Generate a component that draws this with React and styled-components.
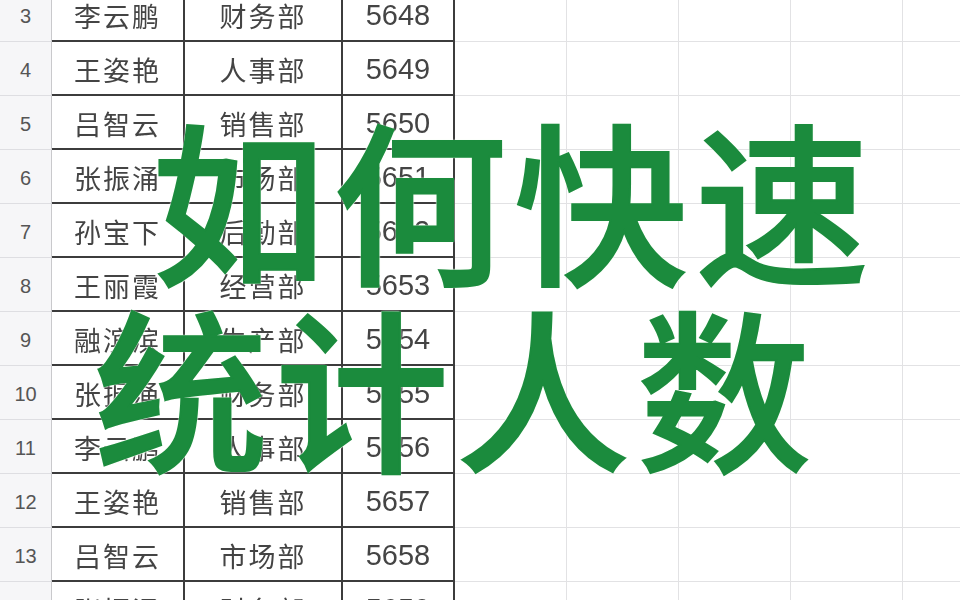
import React from 'react';
import styled, { createGlobalStyle } from 'styled-components';

const GlobalStyle = createGlobalStyle`
  html, body {
    margin: 0;
    padding: 0;
    background: #fff;
    overflow: hidden;
  }
  body {
    font-family: "Noto Sans CJK SC", "Liberation Sans", sans-serif;
  }
`;

const Page = styled.div`
  position: relative;
  width: 960px;
  height: 600px;
  overflow: hidden;
  background: #fff;
`;

const Sheet = styled.div`
  display: grid;
  grid-template-columns: 52px 133px 158px 112px repeat(5, 112px);
  grid-auto-rows: 54px;
  margin-top: -12px;
`;

const RowHead = styled.div`
  display: flex;
  align-items: center;
  justify-content: center;
  padding-top: 4px;
  box-sizing: border-box;
  background: #f6f6f8;
  border-right: 1px solid #c9c9cc;
  border-bottom: 1px solid #dedee2;
  color: #555;
  font-family: "Liberation Sans", Arial, sans-serif;
  font-size: 20px;
`;

const DataCell = styled.div`
  display: flex;
  align-items: center;
  justify-content: center;
  padding-top: 3px;
  box-sizing: border-box;
  border-right: 2px solid #3c3c3c;
  border-bottom: 2px solid #3c3c3c;
  color: #444;
  font-family: ${p => (p.$num ? '"Liberation Sans", Arial' : '"Noto Sans CJK SC"')}, sans-serif;
  font-size: ${p => (p.$num ? '29px' : '27px')};
  letter-spacing: ${p => (p.$num ? '0' : '2px')};
  filter: blur(0.4px);
`;

const EmptyCell = styled.div`
  border-right: 1px solid #e2e2e4;
  border-bottom: 1px solid #e2e2e4;
`;

const Title = styled.div`
  position: absolute;
  top: 103px;
  left: 90px;
  font-family: "Noto Sans CJK SC", sans-serif;
  font-weight: 500;
  font-size: 174px;
  line-height: 187px;
  letter-spacing: 7px;
  color: #1b8b3d;
  white-space: nowrap;
  -webkit-text-stroke: 2px #1b8b3d;
  text-shadow:
    0 0 2px #f4fff2,
    0 0 3px #e8ffe4,
    1px 1px 1px #fff,
    -1px -1px 1px #fff;
`;

const TitleLine = styled.div`
  padding-left: ${p => p.$indent}px;
`;

const rows = [
  [3, '李云鹏', '财务部', 5648],
  [4, '王姿艳', '人事部', 5649],
  [5, '吕智云', '销售部', 5650],
  [6, '张振涌', '市场部', 5651],
  [7, '孙宝下', '后勤部', 5652],
  [8, '王丽霞', '经营部', 5653],
  [9, '融滨滨', '生产部', 5654],
  [10, '张振涌', '财务部', 5655],
  [11, '李云鹏', '人事部', 5656],
  [12, '王姿艳', '销售部', 5657],
  [13, '吕智云', '市场部', 5658],
  [14, '张振涌', '财务部', 5659],
];

const App = () => {
  return (
    <Page>
      <GlobalStyle />
      <Sheet>
        {rows.map(([n, name, dept, code]) => (
          <React.Fragment key={n}>
            <RowHead>{n}</RowHead>
            <DataCell>{name}</DataCell>
            <DataCell>{dept}</DataCell>
            <DataCell $num>{code}</DataCell>
            {[0, 1, 2, 3, 4].map(i => (
              <EmptyCell key={i} />
            ))}
          </React.Fragment>
        ))}
      </Sheet>
      <Title>
        <TitleLine $indent={62}>如何快速</TitleLine>
        <TitleLine $indent={4}>统计人数</TitleLine>
      </Title>
    </Page>
  );
};

export default App;
